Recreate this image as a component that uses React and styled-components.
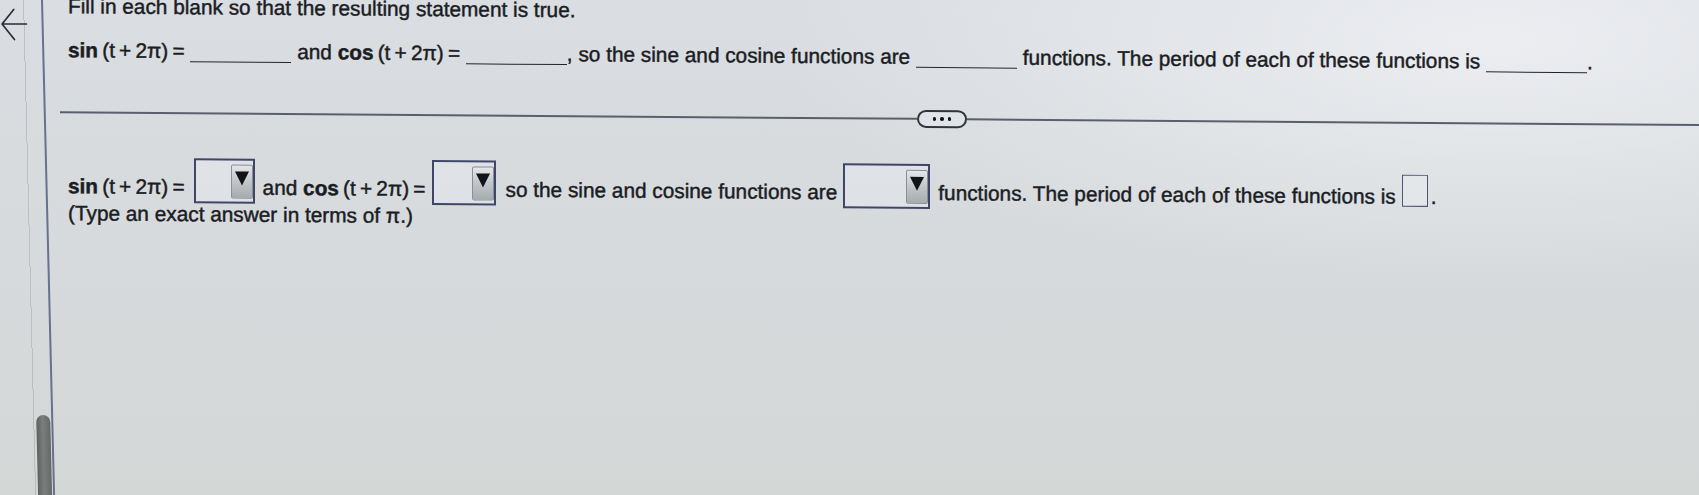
import React from "react";
import styled, { createGlobalStyle } from "styled-components";

const GlobalStyle = createGlobalStyle`
  html, body {
    margin: 0;
    padding: 0;
    height: 100%;
    overflow: hidden;
  }
  body {
    background:
      radial-gradient(ellipse 60% 70% at 88% 8%, rgba(236, 238, 242, 0.95), rgba(236, 238, 242, 0) 70%),
      linear-gradient(180deg, #dadde1 0%, #d7dadc 55%, #d3d7d6 100%);
    font-family: "Liberation Sans", Arial, Helvetica, sans-serif;
    color: #1b1d24;
  }
  #root {
    height: 100%;
  }
`;

const Page = styled.div`
  display: flex;
  height: 100vh;
`;

const Rail = styled.aside`
  flex: 0 0 41px;
  display: flex;
  flex-direction: column;
  justify-content: space-between;
  border-right: 2px solid #68718d;
  background: linear-gradient(
    to right,
    transparent 23px,
    rgba(110, 120, 130, 0.28) 23px,
    rgba(110, 120, 130, 0.28) 24px,
    transparent 24px
  );
  transform: skewX(1.4deg);
  transform-origin: top left;
`;

const BackArrow = styled.svg`
  display: block;
  width: 27px;
  height: 34px;
  margin-top: 8px;
`;

const Thumb = styled.div`
  width: 14px;
  height: 92px;
  margin-left: 26px;
  margin-bottom: -12px;
  border-radius: 7px;
  background: linear-gradient(90deg, #5d6260 0%, #7a7f7d 45%, #646967 100%);
`;

const Content = styled.main`
  flex: 1;
  padding-left: 25px;
  font-size: 20.8px;
  -webkit-text-stroke: 0.45px #1b1d24;
  transform: skewY(0.45deg);
  transform-origin: 0 0;
  white-space: nowrap;
`;

const Header = styled.div`
  margin-top: -6px;
  line-height: 24px;
`;

const Statement = styled.div`
  margin-top: 20px;
  line-height: 24px;
`;

const Math = styled.span`
  word-spacing: -1.6px;
`;

const Fn = styled.b`
  font-weight: bold;
`;

const Blank = styled.span`
  display: inline-block;
  width: 101px;
  height: 2px;
  border-bottom: 1.5px solid #23252c;
  vertical-align: -4px;
`;

const Divider = styled.div`
  display: grid;
  grid-template-columns: 857px 50px 1fr;
  align-items: center;
  height: 18px;
  margin-top: 41px;
  margin-left: -8px;
`;

const Rule = styled.div`
  height: 2px;
  background: #59606b;
`;

const MoreButton = styled.button`
  box-sizing: border-box;
  width: 50px;
  height: 18px;
  padding: 0;
  border: 2px solid #30343c;
  border-radius: 9px;
  background: #e0e3e7;
  display: flex;
  align-items: center;
  justify-content: center;
  gap: 4px;
`;

const Dot = styled.span`
  width: 3.5px;
  height: 3.5px;
  border-radius: 50%;
  background: #111216;
`;

const AnswerRow = styled.div`
  display: flex;
  align-items: center;
  height: 27px;
  line-height: 27px;
  margin-top: 51px;
`;

const Phrase = styled.span``;

const Dropdown = styled.span`
  box-sizing: border-box;
  display: flex;
  justify-content: flex-end;
  width: ${(p) => p.$w}px;
  height: 45px;
  padding: 4px 0 3px;
  margin: 0 ${(p) => p.$mr}px 13px ${(p) => p.$ml}px;
  border: 2px solid #3f4667;
  background: rgba(232, 235, 239, 0.45);
  -webkit-text-stroke: 0;
`;

const DropButton = styled.span`
  box-sizing: border-box;
  display: flex;
  justify-content: center;
  width: 22px;
  height: 100%;
  padding-top: 6px;
  border: 1px solid #8a8f93;
  border-radius: 2px;
  background: linear-gradient(180deg, #e4e6e8 0%, #bfc3c6 55%, #a6abae 100%);
`;

const Caret = styled.span`
  width: 0;
  height: 0;
  border-left: 7.5px solid transparent;
  border-right: 7.5px solid transparent;
  border-top: 14px solid #121316;
`;

const AnswerBox = styled.span`
  box-sizing: border-box;
  width: 26px;
  height: 32px;
  margin: 0 3px 11px 6px;
  border: 1.5px solid #4d5574;
  background: #e4e7ea;
  -webkit-text-stroke: 0;
`;

const Note = styled.div`
  margin-top: 2px;
  line-height: 24px;
`;

function Select({ w, ml, mr }) {
  return (
    <Dropdown $w={w} $ml={ml} $mr={mr}>
      <DropButton>
        <Caret />
      </DropButton>
    </Dropdown>
  );
}

export default function App() {
  return (
    <>
      <GlobalStyle />
      <Page>
        <Rail>
          <BackArrow viewBox="0 0 27 34" fill="none">
            <path
              d="M26 16 H1.5 M13.5 1.5 L1.5 16 L13.5 31.5"
              stroke="#2b2d34"
              strokeWidth="1.7"
              strokeLinecap="round"
              strokeLinejoin="round"
            />
          </BackArrow>
          <Thumb />
        </Rail>
        <Content>
          <Header>Fill in each blank so that the resulting statement is true.</Header>
          <Statement>
            <Math>
              <Fn>sin</Fn> (t + 2π) =
            </Math>{" "}
            <Blank /> and{" "}
            <Math>
              <Fn>cos</Fn> (t + 2π) =
            </Math>{" "}
            <Blank />, so the sine and cosine functions are <Blank /> functions. The period of
            each of these functions is <Blank />.
          </Statement>
          <Divider>
            <Rule />
            <MoreButton aria-label="more">
              <Dot />
              <Dot />
              <Dot />
            </MoreButton>
            <Rule />
          </Divider>
          <AnswerRow>
            <Phrase>
              <Math>
                <Fn>sin</Fn> (t + 2π) =
              </Math>
            </Phrase>
            <Select w={61} ml={9} mr={8} />
            <Phrase>
              and{" "}
              <Math>
                <Fn>cos</Fn> (t + 2π) =
              </Math>
            </Phrase>
            <Select w={64} ml={7} mr={9} />
            <Phrase>so the sine and cosine functions are</Phrase>
            <Select w={87} ml={6} mr={8} />
            <Phrase>functions. The period of each of these functions is</Phrase>
            <AnswerBox />
            <Phrase>.</Phrase>
          </AnswerRow>
          <Note>(Type an exact answer in terms of π.)</Note>
        </Content>
      </Page>
    </>
  );
}
